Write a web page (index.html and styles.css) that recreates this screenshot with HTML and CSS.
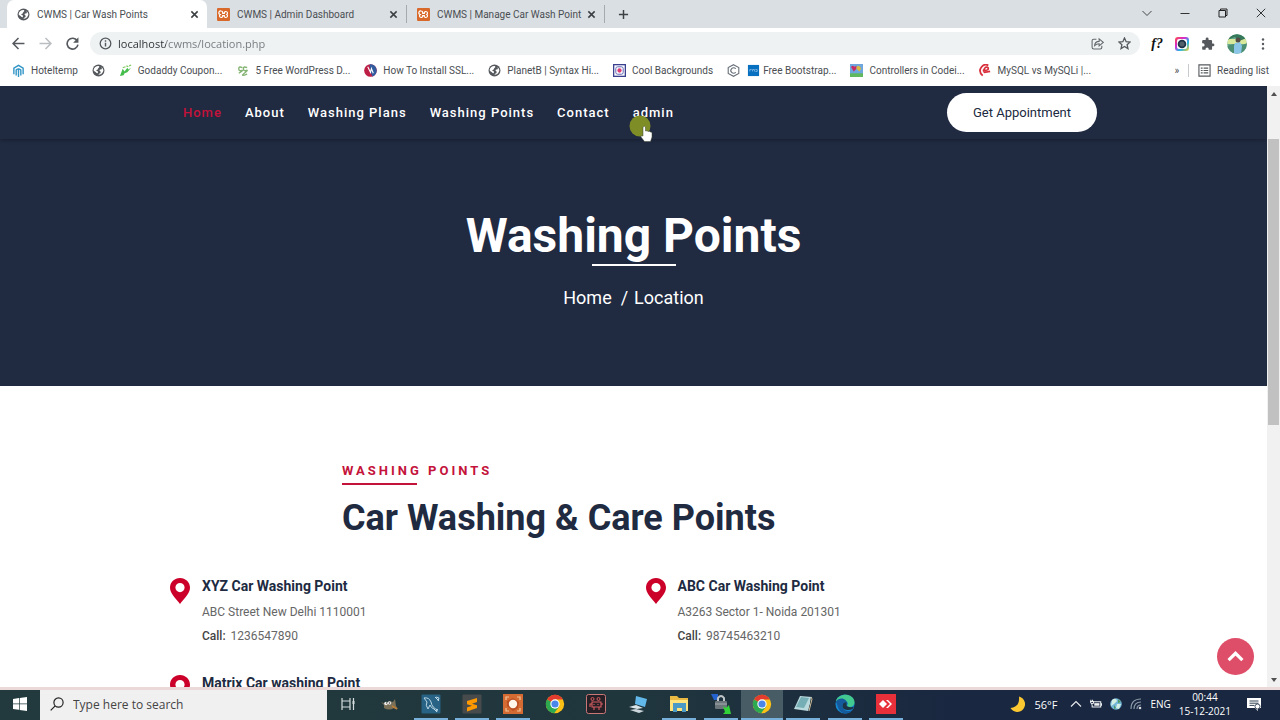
FILE: index.html
```html
<!DOCTYPE html>
<html lang="en">
<head>
  <meta charset="UTF-8">
  <meta name="viewport" content="width=device-width, initial-scale=1.0">
  <title>CWMS | Car Wash Points</title>
  <link rel="stylesheet" href="styles.css">
</head>
<body>
  <!-- Shared icons -->
  <svg class="sprite" aria-hidden="true">
    <symbol id="globe" viewBox="0 0 24 24">
      <circle cx="12" cy="12" r="11" fill="#55595d"/>
      <path d="M3 11c1-5 6-8 10-7 2 2-2 3-2 5s-3 1-3 3 3 0 3 3-2 2-4 0-4-1-4-4zM17 6c3 2 4 4 4 6-1 5-5 8-9 8 0-3 4-2 4-5s-3-2-2-4 3 0 4-2-1-1-1-3z" fill="#fff"/>
    </symbol>
    <symbol id="xampp" viewBox="0 0 24 24">
      <rect width="24" height="24" rx="2" fill="#d9692a"/>
      <path d="M7.500 5.500a3 3 0 0 1 3 3V10h3V8.500a3 3 0 1 1 4.500 3.500 3 3 0 1 1-4.500 3.500V14h-3v1.500A3 3 0 1 1 6 12a3 3 0 0 1 1.500-6.500z" fill="none" stroke="#fff" stroke-width="2.200"/>
    </symbol>
    <symbol id="close" viewBox="0 0 10 10">
      <path d="M1.500 1.500l7 7M8.500 1.500l-7 7" stroke="#3c4043" stroke-width="1.700"/>
    </symbol>
    <symbol id="pin" viewBox="0 0 20 26">
      <path fill-rule="evenodd" d="M10 0C4.400 0 0 4.300 0 9.600 0 15.500 5.500 20.500 10 26c4.500-5.500 10-10.500 10-16.400C20 4.300 15.600 0 10 0zm0 5a4.600 4.600 0 1 1 0 9.200A4.600 4.600 0 0 1 10 5z" fill="#cb0129"/>
    </symbol>
    <symbol id="chrome" viewBox="0 0 24 24">
      <circle cx="12" cy="12" r="11" fill="#fbc116"/>
      <path d="M12 12L2.500 6.500A11 11 0 0 1 21.500 6.500H12z" fill="#e33b2e"/>
      <path d="M2.500 6.500A11 11 0 0 0 11 23l6-8.100-5-2.900z" fill="#2da94f"/>
      <circle cx="12" cy="12" r="5.600" fill="#fff"/>
      <circle cx="12" cy="12" r="4.300" fill="#4a86e8"/>
    </symbol>
  </svg>

  <!-- Browser -->
  <div class="tabstrip">
    <div class="tab active">
      <svg class="favicon"><use href="#globe"/></svg>
      <span class="tab-title">CWMS | Car Wash Points</span>
      <button class="tab-close" aria-label="Close tab"><svg><use href="#close"/></svg></button>
    </div>
    <div class="tab">
      <svg class="favicon"><use href="#xampp"/></svg>
      <span class="tab-title">CWMS | Admin Dashboard</span>
      <button class="tab-close" aria-label="Close tab"><svg><use href="#close"/></svg></button>
    </div>
    <div class="tab">
      <svg class="favicon"><use href="#xampp"/></svg>
      <span class="tab-title">CWMS | Manage Car Wash Point</span>
      <button class="tab-close" aria-label="Close tab"><svg><use href="#close"/></svg></button>
    </div>
    <button class="new-tab" aria-label="New tab"><svg viewBox="0 0 12 12"><path d="M6 1v10M1 6h10" stroke="#3c4043" stroke-width="1.600"/></svg></button>
    <div class="window-buttons">
      <button aria-label="Search tabs"><svg viewBox="0 0 10 10"><path d="M.5 3L5 7.500 9.500 3" fill="none" stroke="#444"/></svg></button>
      <button aria-label="Minimize"><svg viewBox="0 0 10 10"><path d="M.5 5.500h9" stroke="#333"/></svg></button>
      <button aria-label="Restore"><svg viewBox="0 0 10 10"><path d="M1 2.500h6.500V9H1zM2.500 2.500V1H9v6.500H7.500" fill="none" stroke="#222"/></svg></button>
      <button aria-label="Close"><svg viewBox="0 0 10 10"><path d="M.8.8l8.400 8.400M9.200.8L.8 9.200" stroke="#333"/></svg></button>
    </div>
  </div>

  <div class="toolbar">
    <div class="nav-buttons">
      <button aria-label="Back"><svg viewBox="0 0 12 12"><path d="M11.500 6H1.200M6 1L1 6l5 5" fill="none" stroke="#55595d" stroke-width="1.400"/></svg></button>
      <button aria-label="Forward"><svg viewBox="0 0 12 12"><path d="M.5 6h10.300M6 1l5 5-5 5" fill="none" stroke="#bbbec1" stroke-width="1.400"/></svg></button>
      <button aria-label="Reload"><svg viewBox="0 0 12 12"><path d="M10.300 3.500A5 5 0 1 0 11 7" fill="none" stroke="#55595d" stroke-width="1.500"/><path d="M11.500.3v4.900H6.600z" fill="#55595d"/></svg></button>
    </div>
    <div class="omnibox">
      <svg class="info" viewBox="0 0 12 12"><circle cx="6" cy="6" r="4.900" fill="none" stroke="#55595d" stroke-width="1.200"/><path d="M6 5.200v3.500M6 3v1.300" stroke="#55595d" stroke-width="1.300"/></svg>
      <input class="address" type="text" aria-label="Address" value="localhost/cwms/location.php">
      <button aria-label="Share"><svg viewBox="0 0 12 12"><path d="M5 2H2.500Q1 2 1 3.500v6Q1 11 2.500 11h6q1.500 0 1.500-1.500V8M3.300 8c.2-3 2-4 4.200-4V1.800L11.300 5 7.500 8.200V6.300C5.500 6.300 4.300 7 3.300 8z" fill="none" stroke="#65696d"/></svg></button>
      <button aria-label="Bookmark"><svg viewBox="0 0 12 12"><path d="M6 .9l1.500 3.400 3.700.3-2.800 2.500.8 3.600L6 8.800l-3.200 1.900.8-3.600L.8 4.600l3.700-.3z" fill="none" stroke="#55595d" stroke-width="1.200"/></svg></button>
    </div>
    <div class="extensions">
      <button class="fx" aria-label="Font finder"><i>f?</i></button>
      <button aria-label="Camera"><svg viewBox="0 0 14 14">
        <defs><linearGradient id="cam" x1="0" y1="0" x2="1" y2="1"><stop offset="0" stop-color="#ff4c3c"/><stop offset=".35" stop-color="#d829d0"/><stop offset=".65" stop-color="#20b9ee"/><stop offset="1" stop-color="#ffce24"/></linearGradient></defs>
        <rect width="14" height="14" rx="3" fill="url(#cam)"/><rect x="2" y="2" width="10" height="10" rx="2" fill="#fff"/><circle cx="7" cy="7" r="4.300" fill="#1f3447"/><circle cx="7" cy="7" r="2.500" fill="#52616c"/></svg></button>
      <button aria-label="Extensions"><svg viewBox="0 0 24 24"><path d="M20.500 11H19V7a2 2 0 0 0-2-2h-4V3.500a2.500 2.500 0 0 0-5 0V5H4a2 2 0 0 0-2 2v3.800h1.500a2.700 2.700 0 0 1 0 5.400H2V20a2 2 0 0 0 2 2h3.800v-1.500a2.700 2.700 0 0 1 5.400 0V22H17a2 2 0 0 0 2-2v-4h1.500a2.500 2.500 0 0 0 0-5z" fill="#55595d"/></svg></button>
      <button class="profile" aria-label="Profile"><svg viewBox="0 0 20 20"><defs><clipPath id="face"><circle cx="10" cy="10" r="9.800"/></clipPath></defs><g clip-path="url(#face)"><path d="M0 0h20v20H0z" fill="#66a990"/><path d="M0 5h20v5H0z" fill="#d9e99b"/><path d="M0 0h20v4L12 7 8 3 0 6z" fill="#36785a"/><path d="M0 12l7-2v10H0zM14 12l6-3v8l-6 3z" fill="#4c8f72"/><path d="M8 9l5-1 2 4-1 8H7V12z" fill="#8bc5e8"/><circle cx="11" cy="6" r="2.500" fill="#574c45"/></g></svg></button>
      <button class="more" aria-label="Menu"><svg viewBox="0 0 4 12"><circle cx="2" cy="1.500" r="1.200"/><circle cx="2" cy="6" r="1.200"/><circle cx="2" cy="10.500" r="1.200"/></svg></button>
    </div>
  </div>

  <div class="bookmarks">
    <a href="#"><svg viewBox="0 0 14 14"><path d="M2 11V4.500L7 1.500l5 3V11M4.500 12.500V6.500Q7 4 9.500 6.500v6M7 5.500V14" fill="none" stroke="#3195c6" stroke-width="1.500"/></svg>Hoteltemp</a>
    <a href="#" aria-label="Bookmark"><svg><use href="#globe"/></svg></a>
    <a href="#"><svg viewBox="0 0 14 14"><path d="M1 13l3-8 2 3 3-4 1 2 3-2-4 5-3 1-1 2z" fill="#45bd4c"/><path d="M4 4l3-1M8 2l2 1M11 2l2-1" stroke="#7ec95e" stroke-width="1.300"/></svg>Godaddy Coupon...</a>
    <a href="#"><svg viewBox="0 0 14 14"><path d="M7 4Q3 2 3 5t3 2-3 3M12 4Q8 2 8 5t3 2-2 3 3 1" fill="none" stroke="#86b474" stroke-width="1.500"/></svg>5 Free WordPress D...</a>
    <a href="#"><svg viewBox="0 0 14 14"><circle cx="7" cy="7" r="6.800" fill="#bd1e46"/><path d="M6 .3A6.800 6.800 0 0 1 9 13.500L7 8z" fill="#315da0"/><path d="M4 3l3 6 1-4 2 5" fill="none" stroke="#fff" stroke-width="1.200"/></svg>How To Install SSL...</a>
    <a href="#"><svg><use href="#globe"/></svg>PlanetB | Syntax Hi...</a>
    <a href="#"><svg viewBox="0 0 14 14"><rect x=".7" y=".7" width="12.600" height="12.600" fill="#fff" stroke="#39408f" stroke-width="1.400"/><rect x="3" y="3" width="8" height="8" rx="2" fill="none" stroke="#555db0"/><circle cx="7" cy="7" r="2.300" fill="#dc3c75"/></svg>Cool Backgrounds</a>
    <a href="#" aria-label="Codeply"><svg viewBox="0 0 14 14"><path d="M7 .7l5.700 3.100v6.400L7 13.300l-5.700-3.100V3.800zM9.500 5Q7 3 5 5t0 4 4.500 0" fill="none" stroke="#68707a" stroke-width="1.200"/></svg></a>
    <a class="tight" href="#"><svg viewBox="0 0 14 14"><path d="M1 1h12v12H1z" fill="#0870c0"/><path d="M3 8V6h2M6 8V6h2v2M9 6h2v2H9" fill="none" stroke="#9bc9ec" stroke-width=".8"/></svg>Free Bootstrap...</a>
    <a href="#"><svg viewBox="0 0 14 14"><path d="M0 0h14v14H0z" fill="#6ea7df"/><path d="M0 10h14v4H0z" fill="#60b95f"/><path d="M1 3l2-1 2 1 2-1v3L4 8z" fill="#c72961"/><path d="M7 3l2-1 2 1 1 2-2 3-3-3z" fill="#d9b83f"/></svg>Controllers in Codei...</a>
    <a href="#"><svg viewBox="0 0 14 14"><path d="M4 7q6 0 6-2t-3-1.500S4 7 6 9t6-1M4 12.500Q-1 8 2.500 3.500T10 1.500" fill="none" stroke="#d8303d" stroke-width="1.900"/></svg>MySQL vs MySQLi |...</a>
    <div class="bookmarks-end">
      <button aria-label="More bookmarks">»</button>
      <a class="reading" href="#"><svg viewBox="0 0 14 14"><path d="M1 1h12v12H1zM3 4.500h2M3 7h2M3 9.500h2M6 4.500h5M6 7h5M6 9.500h5" fill="none" stroke="#55595d" stroke-width="1.200"/></svg>Reading list</a>
    </div>
  </div>

  <div class="viewport">
    <div class="page">
      <header class="navbar">
        <div class="container navbar-inner">
          <nav>
            <a class="current" href="#">Home</a>
            <a href="#">About</a>
            <a href="#">Washing Plans</a>
            <a href="#">Washing Points</a>
            <a href="#">Contact</a>
            <a class="hovered" href="#">admin
              <svg class="pointer" viewBox="0 0 24 28" aria-hidden="true"><circle cx="11" cy="11" r="10.500" fill="#7f8d27"/><path d="M14 12q1.500-1.500 2.500 0v4q2-.8 2.500.5 2-.6 2.300.6 1.600-.3 1.700 1v4l-1.500 4.500h-6L12 22q-.8-2 2 -1z" fill="#fff" stroke="#38432c" stroke-width=".5"/></svg>
            </a>
          </nav>
          <a class="btn-appointment" href="#">Get Appointment</a>
        </div>
      </header>

      <section class="page-header">
        <h2>Washing Points</h2>
        <div class="breadcrumb"><a href="#">Home</a><span>/</span><a href="#">Location</a></div>
      </section>

      <section class="location">
        <div class="section-header">
          <p>Washing Points</p>
          <h2>Car Washing &amp; Care Points</h2>
        </div>
        <div class="container location-list">
          <div class="location-item">
            <svg><use href="#pin"/></svg>
            <div>
              <h3>XYZ Car Washing Point</h3>
              <p>ABC Street New Delhi 1110001</p>
              <p><strong>Call:</strong>1236547890</p>
            </div>
          </div>
          <div class="location-item">
            <svg><use href="#pin"/></svg>
            <div>
              <h3>ABC Car Washing Point</h3>
              <p>A3263 Sector 1- Noida 201301</p>
              <p><strong>Call:</strong>98745463210</p>
            </div>
          </div>
          <div class="location-item">
            <svg><use href="#pin"/></svg>
            <div>
              <h3>Matrix Car washing Point</h3>
            </div>
          </div>
        </div>
      </section>
      <button class="back-to-top" aria-label="Back to top"><svg viewBox="0 0 16 10"><path d="M1.500 8.500L8 2l6.500 6.500" fill="none" stroke="#fff" stroke-width="3"/></svg></button>
    </div>
    <div class="scrollbar">
      <svg viewBox="0 0 6 4"><path d="M0 4l3-4 3 4z" fill="#505050"/></svg>
      <div class="track"><div class="thumb"></div></div>
      <svg viewBox="0 0 6 4"><path d="M0 0l3 4 3-4z" fill="#505050"/></svg>
    </div>
  </div>

  <!-- Taskbar -->
  <footer class="taskbar">
    <button class="start" aria-label="Start"><svg viewBox="0 0 14 14"><path d="M0 2l6-.9v5.400H0zM6.700 1L14 0v6.500H6.700zM0 7.300h6v5.500L0 12zM6.700 7.300H14V14l-7.300-1z" fill="#fff"/></svg></button>
    <label class="search">
      <svg viewBox="0 0 14 14"><circle cx="8.500" cy="5.500" r="4.600" fill="none" stroke="#222" stroke-width="1.200"/><path d="M5.200 8.800L.7 13.300" stroke="#222" stroke-width="1.200"/></svg>
      <input type="text" placeholder="Type here to search" aria-label="Search">
    </label>
    <div class="apps">
      <button aria-label="Task view"><svg viewBox="0 0 20 20"><path d="M4 4v3h8V4M4 16v-3h8v3M4 7v6M12 7v6M15.500 4v12" fill="none" stroke="#d5dcdd" stroke-width="1.200"/><path d="M14.500 7h2v3h-2z" fill="#d5dcdd"/></svg></button>
      <button aria-label="GIMP"><svg viewBox="0 0 20 20"><path d="M2 8l4 2 4-3 4 1 2-3 1 7 2 3-4-1q-5 3-10 0L5 11z" fill="#7b7058"/><circle cx="7" cy="9.500" r="1.800" fill="#eee"/><circle cx="10.500" cy="9" r="1.800" fill="#ddd"/><path d="M7 9h1M10 9h1" stroke="#222"/><path d="M13 12l5 3" stroke="#bc7d35" stroke-width="1.500"/></svg></button>
      <button class="open" aria-label="MySQL Workbench"><svg viewBox="0 0 20 20"><rect x=".5" y=".5" width="19" height="19" rx="1" fill="#286284"/><path d="M3 4q5-1 7 4 1 6 7 8l-2 0 1 2-3-3q-3-1-4-4l-2 4q-3-4-1-7zM14 3l4 4M15 3l3 1-1 3" fill="none" stroke="#bbd8e6"/></svg></button>
      <button class="open" aria-label="Sublime Text"><svg viewBox="0 0 20 20"><rect x=".5" y=".5" width="19" height="19" rx="1" fill="#484b4c"/><path d="M5 7l10-3v4l-5 1.700 5 1.600V14L5 17.500v-4l5-1.700-5-1.600z" fill="#ff9900"/></svg></button>
      <button class="open" aria-label="Recorder"><svg viewBox="0 0 20 20"><path d="M0 0h20v20H0z" fill="#d46b32"/><path d="M3 6V3h3M14 3h3v3M17 14v3h-3M6 17H3v-3" fill="none" stroke="#f4c69a" stroke-width="1.200"/><path d="M4 7l6-3 6 4-1 6-5 3-6-5z" fill="#bb4e20"/><circle cx="10" cy="10" r="4.200" fill="#fff5e9"/></svg></button>
      <button aria-label="Chrome"><svg><use href="#chrome"/></svg></button>
      <button aria-label="Screen tool"><svg viewBox="0 0 20 20"><rect x=".5" y=".5" width="19" height="19" rx="2" fill="#271f26" stroke="#ca7778"/><path d="M6 8h9v5H6zM6 10H4v3M15 10h2M8 13v3M13 13v3M8 10v1M12 10v1" fill="none" stroke="#d85e61" stroke-width="1.100"/><circle cx="6.500" cy="5" r="1.500" fill="none" stroke="#d85e61"/><circle cx="12.500" cy="5" r="1.500" fill="none" stroke="#d85e61"/></svg></button>
      <button aria-label="Remote desktop"><svg viewBox="0 0 20 20"><path d="M8 2l11 3-2 8-10-3z" fill="#62b8e9"/><path d="M1 13l7-2 7 3-6 1z" fill="#dbe6e9"/><path d="M2 16l6-1 8 2-5 2z" fill="#cbd7dc"/></svg></button>
      <button class="open" aria-label="File Explorer"><svg viewBox="0 0 20 20"><path d="M1 2h7l2 2h9v13H1z" fill="#e9b943"/><path d="M1 6h18v11H1z" fill="#ffe37d"/><path d="M4 18V9h13v9h-4v-4H8v4z" fill="#4a9ac5"/></svg></button>
      <button class="open" aria-label="WinSCP"><svg viewBox="0 0 20 20"><path d="M0 0h7v6H3z" fill="#2463ce"/><path d="M7 8V4q3-4 6 0v4" fill="none" stroke="#bcc4c8" stroke-width="2"/><rect x="4" y="7" width="12" height="8" rx="1" fill="#6b757a"/><path d="M4 10h12" stroke="#a4adb1"/><path d="M12 12l3 2 3-3 2 9h-8l2-2z" fill="#32d338"/></svg></button>
      <button class="open selected" aria-label="Chrome"><svg><use href="#chrome"/></svg></button>
      <button class="open" aria-label="Notepad"><svg viewBox="0 0 20 20"><path d="M7 2l12 1-4 14-14-2z" fill="#b9d9dc"/><path d="M8 3l8 1-5 10-8-1z" fill="#76aeb5"/><path d="M18 3l1 2-3 12" stroke="#d5c4a3"/></svg></button>
      <button class="open" aria-label="Edge"><svg viewBox="0 0 24 24"><circle cx="12" cy="12" r="11.500" fill="#1787d2"/><path d="M1 9C3-2 23-2 23.500 10c0 6-8 7-9 4 3-4-2-7-6-5C4 6 1 9 1 9z" fill="#42ca91"/><path d="M1 9c5-7 14-3 14 3-3-3-7 0-6 4 2 6 9 5 12 3-3 6-14 6-17-2Q2 11 1 9z" fill="#145a9d"/><path d="M10 11q-3 6 3 8 5 1 8-1l2-3q-4 2-8 0c-2-1 0-3-2-5z" fill="#1d3345"/></svg></button>
      <button class="open" aria-label="AnyDesk"><svg viewBox="0 0 20 20"><path d="M0 0h20v20H0z" fill="#e8303a"/><path d="M7 6l4 4-4 4-4-4zM10 6h2l4 4-4 4h-2l4-4z" fill="#fff"/></svg></button>
    </div>
    <div class="tray">
      <svg class="moon" viewBox="0 0 16 16"><path d="M9 .5A7.800 7.800 0 1 1 .5 12Q10 11 9 .5z" fill="#fbc832"/></svg>
      <span class="temp">56°F</span>
      <svg viewBox="0 0 12 12"><path d="M1 8.500l5-5 5 5" fill="none" stroke="#e5e8ea" stroke-width="1.200"/></svg>
      <svg viewBox="0 0 14 12"><path d="M4.500 3.500h8v6h-10V7M13.500 5v3M1 1v2M3 1v2M0 3h4v2L2 6z" fill="none" stroke="#eef0f1" stroke-width="1.200"/><path d="M5 5h6v3H5z" fill="#eef0f1"/></svg>
      <svg viewBox="0 0 12 12"><circle cx="6" cy="6" r="5.800" fill="#74b6d8"/><path d="M2 2q4-3 5 1L4 6 1 8zM7 6h4l-2 5-3-1z" fill="#d5eee3"/><path d="M8 1l3 3-3 1zM4 7l2 3-2 1z" fill="#4e9961"/></svg>
      <svg viewBox="0 0 12 12"><path d="M1 11Q1 1 11 1M4 11q0-7 7-7M7 11q0-4 4-4" fill="none" stroke="#8b98a6" stroke-width="1.200"/><circle cx="10" cy="10" r="1.300" fill="#d2d8dc"/></svg>
      <span class="lang">ENG</span>
      <div class="clock"><span>00:44</span><span>15-12-2021</span></div>
      <svg class="notice" viewBox="0 0 14 14"><path d="M0 1h14v10h-3v3l-3-3H0z" fill="#fff"/><path d="M2.500 4h9M2.500 6.200h9M2.500 8.400h5" stroke="#1a2b40" stroke-width=".9"/><circle cx="10.500" cy="9.500" r="2.500" fill="#fff" stroke="#1a2b40" stroke-width=".8"/></svg>
    </div>
  </footer>
</body>
</html>
```

FILE: styles.css
```css
* {
  box-sizing: border-box;
}
body {
  margin: 0;
  height: 100vh;
  overflow: hidden;
  display: flex;
  flex-direction: column;
  font-family: "Open Sans", sans-serif;
  font-size: 10px;
  color: #4a4e52;
  background: #fff;
}
button {
  display: flex;
  align-items: center;
  justify-content: center;
  padding: 0;
  border: none;
  background: none;
  font: inherit;
  color: inherit;
  cursor: pointer;
}
a {
  color: inherit;
  text-decoration: none;
}
svg {
  display: block;
  flex-shrink: 0;
}
.sprite {
  position: absolute;
  width: 0;
  height: 0;
}

/* Tabs */
.tabstrip {
  display: flex;
  height: 28px;
  flex-shrink: 0;
  padding-left: 7px;
  background: #dadfe3;
  font-family: Roboto, sans-serif;
}
.tab {
  display: flex;
  align-items: center;
  width: 199px;
  padding: 0 8px 0 10px;
}
.tab + .tab + .tab {
  border-left: 1px solid #a5aaaf;
  border-right: 1px solid #a5aaaf;
  height: 18px;
  margin-top: 5px;
}
.tab.active {
  width: 200px;
  background: #fff;
  border-radius: 7px 7px 0 0;
}
.favicon {
  width: 13px;
  height: 13px;
  margin-right: 7px;
}
.tab-title {
  flex: 1;
  white-space: nowrap;
}
.tab-close svg {
  width: 9px;
  height: 9px;
}
.new-tab svg {
  width: 11px;
  height: 11px;
  margin-left: 13px;
}
.window-buttons {
  display: flex;
  margin-left: auto;
}
.window-buttons button {
  width: 38px;
  padding-bottom: 3px;
}
.window-buttons svg {
  width: 10px;
  height: 10px;
}

/* Toolbar */
.toolbar {
  display: flex;
  align-items: center;
  height: 31px;
  flex-shrink: 0;
  padding: 0 11px 0 12px;
}
.nav-buttons {
  display: flex;
  gap: 14px;
  width: 78px;
}
.nav-buttons svg,
.omnibox svg {
  width: 13px;
  height: 13px;
}
.omnibox {
  display: flex;
  align-items: center;
  gap: 14px;
  flex: 1;
  height: 23px;
  padding: 0 9px;
  border-radius: 12px;
  background: #eef2f3;
}
.omnibox .info {
  margin-right: -8px;
}
/* host part darker than the path */
.address {
  flex: 1;
  min-width: 0;
  padding: 0;
  border: none;
  outline: none;
  background: linear-gradient(to right, #2b2e31 48px, #73777b 48px);
  background-clip: text;
  -webkit-background-clip: text;
  -webkit-text-fill-color: transparent;
  font: 11px "Open Sans", sans-serif;
}
.extensions {
  display: flex;
  align-items: center;
  gap: 12px;
  margin-left: 11px;
}
.extensions svg {
  width: 14px;
  height: 14px;
}
.extensions .profile svg {
  width: 20px;
  height: 20px;
}
.extensions .more svg {
  width: 4px;
  height: 12px;
  margin: 0 4px 0 2px;
  fill: #55595d;
}
.fx {
  font: bold 14px "Liberation Serif", serif;
  color: #111;
}

/* Bookmarks */
.bookmarks {
  display: flex;
  align-items: center;
  gap: 14px;
  height: 27px;
  flex-shrink: 0;
  padding: 0 11px 4px 12px;
  font-family: Roboto, sans-serif;
  white-space: nowrap;
}
.bookmarks a {
  display: flex;
  align-items: center;
  gap: 6px;
}
.bookmarks .tight {
  gap: 3px;
  margin-left: -7px;
}
.bookmarks svg {
  width: 13px;
  height: 13px;
}
.bookmarks-end {
  display: flex;
  align-items: center;
  gap: 9px;
  margin-left: auto;
}
.bookmarks .reading {
  border-left: 1px solid #c8cbce;
  padding-left: 9px;
}

/* Page */
.viewport {
  flex: 1;
  min-height: 0;
  display: flex;
}
.page {
  position: relative;
  flex: 1;
  overflow: hidden;
  font-family: Roboto, sans-serif;
  color: #666;
}
.container {
  max-width: 951px;
  margin: 0 auto;
  padding: 0 12px;
}
.navbar {
  position: relative;
  background: #202a41;
  box-shadow: 0 1px 4px rgba(0, 0, 0, 0.3);
  color: #fff;
}
.navbar-inner {
  display: flex;
  align-items: center;
  justify-content: space-between;
  height: 53px;
}
.navbar nav {
  display: flex;
  gap: 23px;
  padding-left: 13px;
  font-size: 13px;
  font-weight: 500;
  letter-spacing: 1px;
}
.navbar .current {
  color: #c4123a;
}
.hovered {
  position: relative;
}
.pointer {
  position: absolute;
  left: -4px;
  top: 10px;
  width: 24px;
  height: 28px;
}
.btn-appointment {
  padding: 10px 26px;
  border-radius: 20px;
  background: #fff;
  color: #202a41;
  font-size: 13px;
  line-height: 19px;
}
.page-header {
  padding: 68px 0 76px;
  background: #202a41;
  color: #fff;
  text-align: center;
}
.page-header h2 {
  margin: 0;
  font-size: 48px;
  line-height: 57px;
}
.page-header h2::after {
  content: "";
  display: block;
  width: 84px;
  height: 2px;
  margin: 0 auto;
  background: #fff;
}
.breadcrumb {
  display: flex;
  justify-content: center;
  margin-top: 20px;
  font-size: 18px;
  line-height: 24px;
}
.breadcrumb span {
  margin: 0 6px 0 9px;
}
.section-header {
  max-width: 583px;
  margin: 0 auto;
  padding-top: 75px;
}
.section-header p {
  margin: 0;
  color: #c4123a;
  font-size: 13px;
  font-weight: 700;
  line-height: 20px;
  letter-spacing: 3px;
  text-transform: uppercase;
}
.section-header p::after {
  content: "";
  display: block;
  width: 75px;
  height: 2px;
  margin-top: 2px;
  background: #c4123a;
}
.section-header h2 {
  margin: 9px 0 35px;
  color: #202a41;
  font-size: 36px;
  line-height: 48px;
}
.location-list {
  display: grid;
  grid-template-columns: 1fr 1fr;
  column-gap: 24px;
  row-gap: 26px;
}
.location-item {
  display: flex;
  gap: 12px;
}
.location-item svg {
  width: 20px;
  height: 26px;
  margin-top: 1px;
}
.location-item h3 {
  margin: 0 0 5px;
  color: #202a41;
  font-size: 14px;
  line-height: 18px;
}
.location-item p {
  margin: 0;
  font-size: 12px;
  line-height: 24px;
}
.location-item strong {
  margin-right: 5px;
  font-weight: 500;
  color: #444;
}
.back-to-top {
  position: absolute;
  right: 13px;
  bottom: 12px;
  width: 37px;
  height: 37px;
  border-radius: 50%;
  background: #df4e68;
}
.back-to-top svg {
  width: 17px;
  height: 11px;
}

/* Scrollbar */
.scrollbar {
  display: flex;
  flex-direction: column;
  align-items: center;
  width: 13px;
  padding: 6px 0 5px;
  background: #f1f1f1;
}
.scrollbar svg {
  width: 6px;
  height: 4px;
}
.track {
  flex: 1;
  align-self: stretch;
  padding: 43px 1px 0;
}
.thumb {
  height: 53%;
  background: #c1c1c1;
}

/* Taskbar */
.taskbar {
  display: flex;
  height: 33px;
  flex-shrink: 0;
  border-top: 3px solid #ead9d8;
  background: linear-gradient(to right, #223a3d, #20363d 50%, #192740 75%, #192740);
  color: #fff;
}
.start {
  width: 40px;
  padding-bottom: 2px;
}
.start svg {
  width: 14px;
  height: 14px;
}
.search {
  display: flex;
  align-items: center;
  gap: 9px;
  width: 287px;
  padding: 0 0 2px 10px;
  background: #f0f0f0;
}
.search svg {
  width: 14px;
  height: 14px;
}
.search input {
  flex: 1;
  min-width: 0;
  padding: 0;
  border: none;
  outline: none;
  background: none;
  font: 12px "Open Sans", sans-serif;
}
.search input::placeholder {
  color: #444;
  opacity: 1;
}
.apps {
  display: grid;
  grid-template-columns: repeat(14, 1fr);
  width: 580px;
}
.apps button {
  justify-self: center;
  width: 34px;
  border-bottom: 2px solid transparent;
}
.apps .open {
  border-bottom-color: #78b0dc;
}
.apps .selected {
  justify-self: stretch;
  width: auto;
  background: #485c65;
}
.apps svg {
  width: 20px;
  height: 20px;
}
.tray {
  display: flex;
  align-items: center;
  gap: 8px;
  margin-left: auto;
  padding: 0 19px 2px 0;
}
.tray svg {
  width: 12px;
  height: 12px;
}
.tray .moon {
  width: 16px;
  height: 16px;
}
.temp {
  margin-right: 5px;
  font-size: 11px;
}
.clock {
  display: flex;
  flex-direction: column;
  align-items: center;
  line-height: 14px;
}
.tray .notice {
  width: 14px;
  height: 14px;
  margin-left: 8px;
}
```
